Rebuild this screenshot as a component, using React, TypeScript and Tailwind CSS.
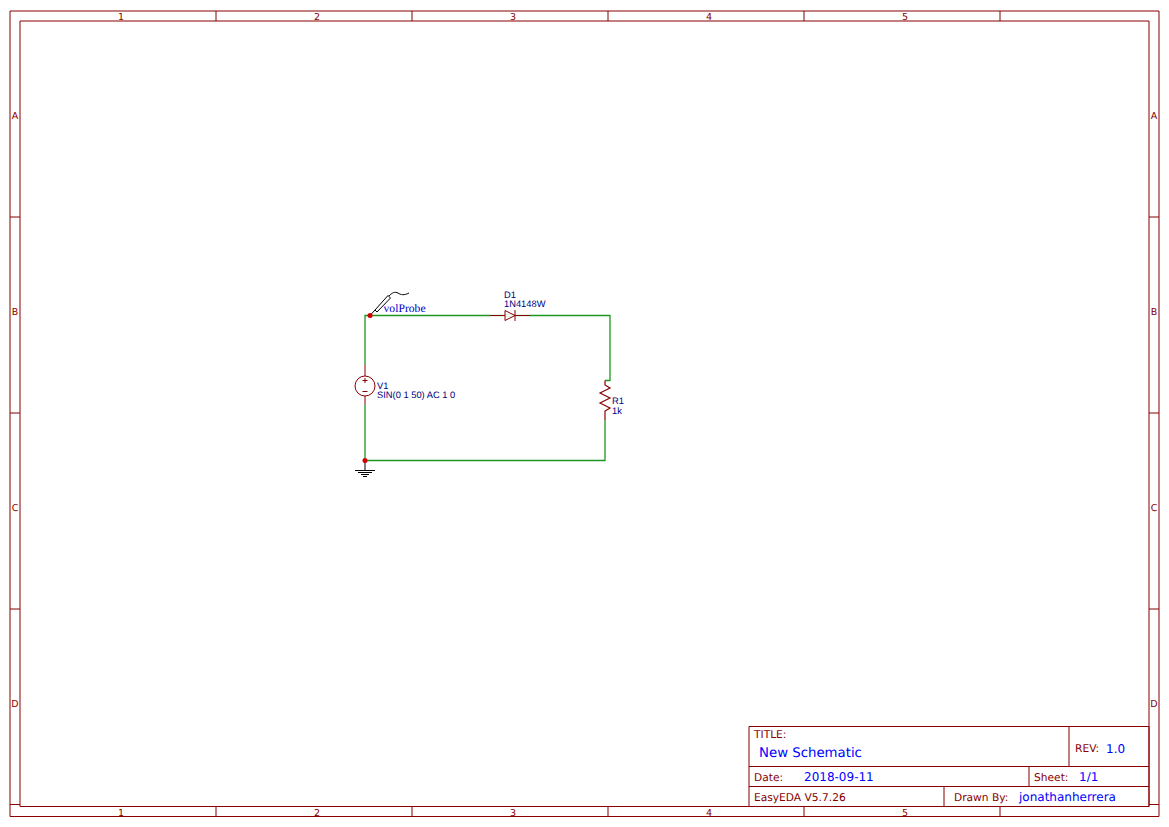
import React from "react";

const RED = "#880000";
const GREEN = "#1f961f";
const BLUE = "#0000ff";
const NAVY = "#000080";

const columns = [216, 412, 608, 804, 1000];
const rows = [217, 413, 609];
const colLabels = [
  { x: 121, t: "1" },
  { x: 317, t: "2" },
  { x: 513, t: "3" },
  { x: 709, t: "4" },
  { x: 905, t: "5" },
];
const rowLabels = [
  { y: 119, t: "A" },
  { y: 315, t: "B" },
  { y: 511, t: "C" },
  { y: 707, t: "D" },
];

function SheetFrame() {
  return (
    <g fill="none" stroke={RED} strokeWidth={1}>
      <path d="M10 816.5V11H1159V816.5H10" />
      <path d="M20 806.5V21H1149V806.5H20" />
      {columns.map((x) => (
        <path key={x} d={`M${x} 11V21M${x} 806.5V816.5`} />
      ))}
      {rows.map((y) => (
        <path key={y} d={`M10 ${y}H20M1149 ${y}H1159`} />
      ))}
      <path d="M10 804.5H20M1149 804.5H1159" />
    </g>
  );
}

function FrameLabels() {
  return (
    <g fill={RED} textAnchor="middle" className="[font-family:'DejaVu_Sans',sans-serif] text-[9.5px]">
      {colLabels.map((c) => (
        <React.Fragment key={c.t}>
          <text x={c.x} y={20}>{c.t}</text>
          <text x={c.x} y={816}>{c.t}</text>
        </React.Fragment>
      ))}
      {rowLabels.map((r) => (
        <React.Fragment key={r.t}>
          <text x={15} y={r.y}>{r.t}</text>
          <text x={1154} y={r.y}>{r.t}</text>
        </React.Fragment>
      ))}
    </g>
  );
}

function TitleBlock() {
  return (
    <g className="[font-family:'DejaVu_Sans',sans-serif]">
      <g fill="none" stroke={RED}>
        <path d="M749 806.5V726.5H1149V806.5H749" />
        <path d="M749 766.5H1149M749 786.5H1149" />
        <path d="M1069 726.5V766.5M1029 766.5V786.5M944 786.5V806.5" />
      </g>
      <g fill={RED} className="text-[10.67px]">
        <text x={754} y={738}>TITLE:</text>
        <text x={1075} y={752}>REV:</text>
        <text x={754} y={781}>Date:</text>
        <text x={1034} y={781}>Sheet:</text>
        <text x={754} y={801}>EasyEDA V5.7.26</text>
        <text x={954} y={801}>Drawn By:</text>
      </g>
      <g fill={BLUE} className="text-[12px]">
        <text x={759} y={757} className="text-[13.3px]">New Schematic</text>
        <text x={1106} y={753}>1.0</text>
        <text x={804} y={781}>2018-09-11</text>
        <text x={1079} y={781}>1/1</text>
        <text x={1019} y={801}>jonathanherrera</text>
      </g>
    </g>
  );
}

function Circuit() {
  return (
    <g fill="none">
      {/* wires */}
      <g stroke={GREEN} strokeWidth={1.3}>
        <path d="M365 365V315.5H610V380.5H605" />
        <path d="M605 420V460.5H365V405" />
      </g>

      {/* V1 source */}
      <g stroke={RED}>
        <path d="M365 365V376M365 396V405" stroke="#ffffff" strokeWidth={2} />
        <path d="M365 365V376M365 396V405" />
        <circle cx={365} cy={386} r={10} />
        <path d="M362.5 380.5H367.5M365 378V383M362.5 391.5H367.5" />
      </g>

      {/* D1 */}
      <g stroke={RED}>
        <path d="M490 315.5H530" stroke="#ffffff" strokeWidth={2} />
        <path d="M490 315.5H505M515 315.5H530" />
        <path d="M505 310.5V320.5L515 315.5Z" />
        <path d="M515 310V321" />
      </g>

      {/* R1 */}
      <path stroke={RED} strokeWidth={1.2} d="M605 380.5V385L610 388L600 393L610 398L600 403L610 408L605 411V420" />

      {/* probe */}
      <g stroke="#000000">
        <path d="M370 315.5L375 310" />
        <path d="M375 310L388 295.5L390.5 298L377 312Z" fill="#ffffff" />
        <path d="M389 296C392 292.5 395 291.5 398 293C401 295 404 295.5 409 293" />
      </g>
      <circle cx={370} cy={315.5} r={2.5} fill="#d40000" />

      {/* ground */}
      <g stroke="#000000">
        <path d="M365 461V470" />
        <path d="M355 470.5H375M358 472.5H372M361 474.5H369M363 476.5H367" />
      </g>
      <circle cx={365} cy={460.5} r={2.5} fill="#d40000" />
    </g>
  );
}

function PartLabels() {
  return (
    <g fill={NAVY} className="[font-family:'Liberation_Sans',sans-serif] text-[9.33px]">
      <text x={377} y={388.7}>V1</text>
      <text x={377} y={398.4}>SIN(0 1 50) AC 1 0</text>
      <text x={504} y={297.6}>D1</text>
      <text x={504} y={307}>1N4148W</text>
      <text x={612} y={404}>R1</text>
      <text x={612} y={413.6}>1k</text>
      <text x={383.5} y={312} fill="#0000cc" className="[font-family:'Liberation_Serif',serif] text-[11.67px]">volProbe</text>
    </g>
  );
}

export default function App() {
  return (
    <div className="h-[827px] w-[1169px] overflow-hidden bg-white">
      <svg width={1169} height={827} viewBox="0 0 1169 827" className="block [text-rendering:geometricPrecision]">
        <SheetFrame />
        <FrameLabels />
        <TitleBlock />
        <Circuit />
        <PartLabels />
      </svg>
    </div>
  );
}
